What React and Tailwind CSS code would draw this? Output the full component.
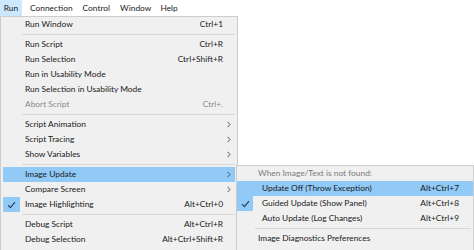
import React from "react";

/* ---------- Menu data ---------- */
const RUN_MENU = [
  { label: "Run Window", shortcut: "Ctrl+1" },
  { sep: true },
  { label: "Run Script", shortcut: "Ctrl+R" },
  { label: "Run Selection", shortcut: "Ctrl+Shift+R" },
  { label: "Run in Usability Mode" },
  { label: "Run Selection in Usability Mode" },
  { label: "Abort Script", shortcut: "Ctrl+.", disabled: true },
  { sep: true },
  { label: "Script Animation", sub: true },
  { label: "Script Tracing", sub: true },
  { label: "Show Variables", sub: true },
  { sep: true },
  { label: "Image Update", sub: true, active: true, open: true },
  { label: "Compare Screen", sub: true },
  { label: "Image Highlighting", shortcut: "Alt+Ctrl+0", checked: true },
  { sep: true },
  { label: "Debug Script", shortcut: "Alt+Ctrl+R" },
  { label: "Debug Selection", shortcut: "Alt+Ctrl+Shift+R" },
];

const UPDATE_MENU = [
  { label: "When Image/Text is not found:", header: true },
  { label: "Update Off (Throw Exception)", shortcut: "Alt+Ctrl+7", active: true },
  { label: "Guided Update (Show Panel)", shortcut: "Alt+Ctrl+8", checked: true },
  { label: "Auto Update (Log Changes)", shortcut: "Alt+Ctrl+9" },
  { sep: true },
  { label: "Image Diagnostics Preferences", header: true, plain: true },
];

/* ---------- Glyphs ---------- */
const Check = () => (
  <svg width="9" height="8" viewBox="0 0 9 8" fill="none">
    <path d="M1 4.2 L3.4 6.6 L8 1.2" stroke="#2b3a55" strokeWidth="1.1" />
  </svg>
);

const Chevron = () => (
  <svg width="4" height="7" viewBox="0 0 4 7" fill="none">
    <path d="M0.6 0.8 L3 3.5 L0.6 6.2" stroke="#444" strokeWidth="0.9" />
  </svg>
);

/* ---------- Main dropdown ---------- */
function RunMenu() {
  return (
    <div className="w-[238px] border border-[#cccccc] bg-[#f0f0f0] px-[2px] pb-[4px]">
      {RUN_MENU.map((it, i) =>
        it.sep ? (
          <div key={i} className="h-[5px] flex items-center pl-[19px]">
            <div className="h-px w-full bg-[#d7d7d7]" />
          </div>
        ) : (
          <div
            key={i}
            className={`relative h-[15px] flex items-center ${it.active ? "bg-[#91c9f7]" : ""}`}
          >
            <div className="w-[22px] h-full flex">
              {it.checked && (
                <div className="w-[17px] h-full bg-[#91c9f7] flex items-center justify-center">
                  <Check />
                </div>
              )}
            </div>
            <span className={`flex-1 ${it.disabled ? "text-[#8a8a8a]" : "text-[#1a1a1a]"}`}>{it.label}</span>
            {it.shortcut && (
              <span className={it.disabled ? "text-[#8a8a8a]" : "text-[#1a1a1a]"}>{it.shortcut}</span>
            )}
            <div className="w-[12px] flex justify-center">{it.sub && <Chevron />}</div>
          </div>
        )
      )}
    </div>
  );
}

/* ---------- Image Update submenu ---------- */
function UpdateMenu() {
  return (
    <div className="absolute left-[236px] top-[165px] w-[238px] border border-[#cccccc] bg-[#f0f0f0] pb-[4px] shadow-[2px_2px_3px_rgba(0,0,0,0.15)]">
      {UPDATE_MENU.map((it, i) =>
        it.sep ? (
          <div key={i} className="h-[5px] flex items-center pl-[18px] pr-[2px]">
            <div className="h-px w-full bg-[#d7d7d7]" />
          </div>
        ) : (
          <div
            key={i}
            className={`h-[15px] flex items-center ${it.active ? "bg-[#91c9f7]" : ""}`}
          >
            <div className={`${it.header ? "w-[21px]" : "w-[25px]"} h-full flex`}>
              {it.checked && (
                <div className="w-[16px] h-full bg-[#91c9f7] flex items-center justify-center">
                  <Check />
                </div>
              )}
            </div>
            <span className={`flex-1 ${it.header && !it.plain ? "text-[#7a7a7a]" : "text-[#1a1a1a]"}`}>
              {it.label}
            </span>
            {it.shortcut && <span className="text-[#1a1a1a] pr-[14px]">{it.shortcut}</span>}
          </div>
        )
      )}
    </div>
  );
}

export default function App() {
  return (
    <div className="relative w-[474px] h-[250px] overflow-hidden bg-white text-[8.4px] leading-none font-['Lato',sans-serif]">
      {/* Menu bar */}
      <div className="h-[16px] flex items-center text-[#1a1a1a]">
        <div className="h-full w-[22px] bg-[#cce8ff] flex items-center justify-center">Run</div>
        <span className="ml-[8px]">Connection</span>
        <span className="ml-[10px]">Control</span>
        <span className="ml-[10px]">Window</span>
        <span className="ml-[9px]">Help</span>
      </div>

      <RunMenu />
      <UpdateMenu />
    </div>
  );
}
